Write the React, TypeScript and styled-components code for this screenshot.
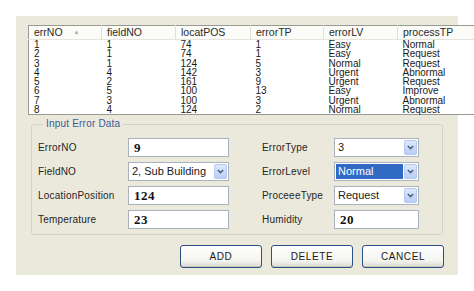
import React from 'react';
import styled, { createGlobalStyle } from 'styled-components';

const GlobalStyle = createGlobalStyle`
  html, body {
    margin: 0;
    padding: 0;
    background: #ffffff;
  }
  body {
    font-family: "Liberation Sans", Arial, sans-serif;
    color: #1c1c1c;
  }
`;

const Page = styled.div`
  width: 474px;
  height: 291px;
  padding: 16px;
  box-sizing: border-box;
`;

const Window = styled.div`
  width: 442px;
  height: 259px;
  background: #ebe9dc;
  padding: 9px 0 0 12px;
  box-sizing: border-box;
`;

const Grid = styled.table`
  width: 414px;
  table-layout: fixed;
  border-collapse: collapse;
  background: #ffffff;
  border: 1px solid #9a9a94;
  font-size: 10px;
  line-height: 9.3px;
`;

const HeadCell = styled.th<{ $w: number }>`
  width: ${(p) => p.$w}px;
  height: 13px;
  padding: 0 0 0 5px;
  text-align: left;
  font-weight: normal;
  font-size: 10.5px;
  color: #2a2a2a;
  background: #fbfbf8;
  border-right: 1px solid #e2e0d6;
  border-bottom: 1px solid #e6e4da;
  white-space: nowrap;
  line-height: 13px;
`;

const SortMark = styled.span`
  display: inline-block;
  margin-left: 11px;
  font-size: 6px;
  color: #a8a8a0;
  vertical-align: 2px;
`;

const Cell = styled.td`
  padding: 0 0 0 5px;
  height: 9.3px;
  white-space: nowrap;
  color: #1a1a1a;
`;

const Group = styled.fieldset`
  margin: 3px 0 0 3px;
  width: 412px;
  box-sizing: border-box;
  border: 1px solid #d6d3c3;
  border-radius: 3px;
  padding: 8px 0 5px 6px;
`;

const Legend = styled.legend`
  padding: 0 3px;
  margin-left: 5px;
  font-size: 10px;
  letter-spacing: 0.2px;
  color: #3a5a9a;
  line-height: 12px;
`;

const Form = styled.div`
  display: grid;
  grid-template-columns: 90px 101px 33px 72px 85px;
  grid-auto-rows: 19px;
  row-gap: 5px;
  align-items: center;
`;

const Label = styled.span<{ $col: number }>`
  grid-column: ${(p) => p.$col};
  font-size: 10px;
  letter-spacing: 0.2px;
  color: #262626;
  white-space: nowrap;
`;

const TextBox = styled.div<{ $col: number }>`
  grid-column: ${(p) => p.$col};
  height: 19px;
  box-sizing: border-box;
  background: #ffffff;
  border: 1px solid #a9b3bf;
  padding: 0 5px;
  font-family: "Liberation Serif", "Times New Roman", serif;
  font-weight: bold;
  font-size: 13px;
  letter-spacing: 0.5px;
  line-height: 17px;
  color: #111;
`;

const Combo = styled.div<{ $col: number }>`
  grid-column: ${(p) => p.$col};
  height: 19px;
  box-sizing: border-box;
  background: #ffffff;
  border: 1px solid #a9b3bf;
  display: flex;
  align-items: stretch;
  padding: 1px;
`;

const ComboText = styled.div<{ $selected?: boolean }>`
  flex: 1;
  font-size: 11px;
  line-height: 15px;
  padding-left: 2px;
  margin-right: 1px;
  background: ${(p) => (p.$selected ? '#316ac5' : 'transparent')};
  color: ${(p) => (p.$selected ? '#ffffff' : '#1a1a1a')};
  white-space: nowrap;
  overflow: hidden;
`;

const DropButton = styled.div`
  width: 13px;
  background: linear-gradient(180deg, #dfe8fd 0%, #b9cdf5 100%);
  border: 1px solid #b6c8ef;
  border-radius: 2px;
  box-sizing: border-box;
  display: flex;
  align-items: center;
  justify-content: center;
`;

const Actions = styled.div`
  display: flex;
  justify-content: flex-end;
  gap: 9px;
  width: 416px;
  margin-top: 10px;
`;

const Button = styled.button`
  width: 82px;
  height: 23px;
  border: 1px solid #2c4f86;
  border-radius: 3px;
  background: linear-gradient(180deg, #ffffff 0%, #f4f4f0 70%, #dcdad0 100%);
  box-shadow: inset 0 -1px 0 #c9c6ba, inset 0 1px 0 #ffffff;
  font-family: "Liberation Sans", Arial, sans-serif;
  font-size: 10px;
  letter-spacing: 0.6px;
  color: #1a1a1a;
  padding: 0;
`;

const Chevron = () => (
  <svg width="7" height="5" viewBox="0 0 7 5">
    <path d="M0.8 1 L3.5 3.6 L6.2 1" fill="none" stroke="#4d6185" strokeWidth="1.5" />
  </svg>
);

const columns = [
  { key: 'errNO', w: 67 },
  { key: 'fieldNO', w: 68 },
  { key: 'locatPOS', w: 69 },
  { key: 'errorTP', w: 67 },
  { key: 'errorLV', w: 68 },
  { key: 'processTP', w: 75 },
];

const rows = [
  ['1', '1', '74', '1', 'Easy', 'Normal'],
  ['2', '1', '74', '1', 'Easy', 'Request'],
  ['3', '1', '124', '5', 'Normal', 'Request'],
  ['4', '4', '142', '3', 'Urgent', 'Abnormal'],
  ['5', '2', '161', '9', 'Urgent', 'Request'],
  ['6', '5', '100', '13', 'Easy', 'Improve'],
  ['7', '3', '100', '3', 'Urgent', 'Abnormal'],
  ['8', '4', '124', '2', 'Normal', 'Request'],
];

const ComboBox = ({ col, value, selected }: { col: number; value: string; selected?: boolean }) => (
  <Combo $col={col}>
    <ComboText $selected={selected}>{value}</ComboText>
    <DropButton>
      <Chevron />
    </DropButton>
  </Combo>
);

const App = () => {
  return (
    <Page>
      <GlobalStyle />
      <Window>
        <Grid>
          <thead>
            <tr>
              {columns.map((c, i) => (
                <HeadCell key={c.key} $w={c.w}>
                  {c.key}
                  {i === 0 && <SortMark>▲</SortMark>}
                </HeadCell>
              ))}
            </tr>
          </thead>
          <tbody>
            {rows.map((r) => (
              <tr key={r[0]}>
                {r.map((v, i) => (
                  <Cell key={i}>{v}</Cell>
                ))}
              </tr>
            ))}
          </tbody>
        </Grid>

        <Group>
          <Legend>Input Error Data</Legend>
          <Form>
            <Label $col={1}>ErrorNO</Label>
            <TextBox $col={2}>9</TextBox>
            <Label $col={4}>ErrorType</Label>
            <ComboBox col={5} value="3" />

            <Label $col={1}>FieldNO</Label>
            <ComboBox col={2} value="2, Sub Building" />
            <Label $col={4}>ErrorLevel</Label>
            <ComboBox col={5} value="Normal" selected />

            <Label $col={1}>LocationPosition</Label>
            <TextBox $col={2}>124</TextBox>
            <Label $col={4}>ProceeeType</Label>
            <ComboBox col={5} value="Request" />

            <Label $col={1}>Temperature</Label>
            <TextBox $col={2}>23</TextBox>
            <Label $col={4}>Humidity</Label>
            <TextBox $col={5}>20</TextBox>
          </Form>
        </Group>

        <Actions>
          <Button>ADD</Button>
          <Button>DELETE</Button>
          <Button>CANCEL</Button>
        </Actions>
      </Window>
    </Page>
  );
};

export default App;
